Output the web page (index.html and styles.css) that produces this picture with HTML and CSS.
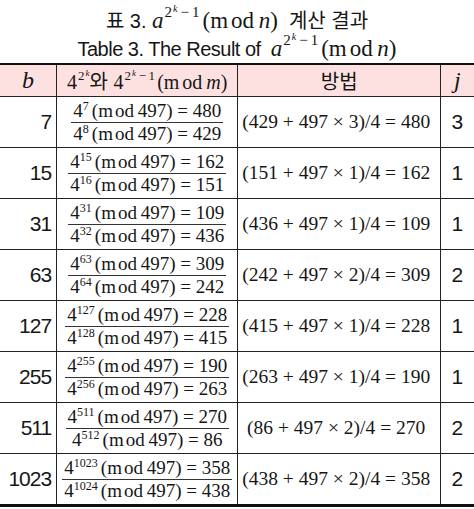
FILE: index.html
```html
<!DOCTYPE html>
<html>
<head>
<meta charset="utf-8">
<link rel="stylesheet" href="styles.css">
</head>
<body>
<div class="page">
  <div class="caption">
    <div class="cap-line ko">표 3. <span class="m"><i>a</i><sup class="s1">2<sup class="s2"><i>k</i></sup>&thinsp;−&thinsp;1</sup><span class="pl">(m<span class="gap"></span>od&thinsp;<i>n</i>)</span></span>&nbsp; 계산 결과</div>
    <div class="cap-line en">Table 3. The Result of&nbsp; <span class="m"><i>a</i><sup class="s1">2<sup class="s2"><i>k</i></sup>&thinsp;−&thinsp;1</sup><span class="pl">(m<span class="gap"></span>od&thinsp;<i>n</i>)</span></span></div>
  </div>
  <table class="tbl">
    <thead>
      <tr>
        <th class="c-b"><i class="m">b</i></th>
        <th class="c-f"><span class="m">4<sup class="s1">2<sup class="s2"><i>k</i></sup></sup></span><span class="ko">와</span> <span class="m">4<sup class="s1">2<sup class="s2"><i>k</i></sup>&thinsp;−&thinsp;1</sup><span class="pl">(m<span class="gap"></span>od&thinsp;<i>m</i>)</span></span></th>
        <th class="c-m ko">방법</th>
        <th class="c-j"><i class="m">j</i></th>
      </tr>
    </thead>
    <tbody>
      <tr><td class="c-b">7</td><td class="c-f"><div class="frac"><div class="num">4<sup>7</sup>(m<span class="gap"></span>od&thinsp;497) = 480</div><div class="den">4<sup>8</sup>(m<span class="gap"></span>od&thinsp;497) = 429</div></div></td><td class="c-m">(429 + 497 × 3)/4 = 480</td><td class="c-j">3</td></tr>
      <tr><td class="c-b">15</td><td class="c-f"><div class="frac"><div class="num">4<sup>15</sup>(m<span class="gap"></span>od&thinsp;497) = 162</div><div class="den">4<sup>16</sup>(m<span class="gap"></span>od&thinsp;497) = 151</div></div></td><td class="c-m">(151 + 497 × 1)/4 = 162</td><td class="c-j">1</td></tr>
      <tr><td class="c-b">31</td><td class="c-f"><div class="frac"><div class="num">4<sup>31</sup>(m<span class="gap"></span>od&thinsp;497) = 109</div><div class="den">4<sup>32</sup>(m<span class="gap"></span>od&thinsp;497) = 436</div></div></td><td class="c-m">(436 + 497 × 1)/4 = 109</td><td class="c-j">1</td></tr>
      <tr><td class="c-b">63</td><td class="c-f"><div class="frac"><div class="num">4<sup>63</sup>(m<span class="gap"></span>od&thinsp;497) = 309</div><div class="den">4<sup>64</sup>(m<span class="gap"></span>od&thinsp;497) = 242</div></div></td><td class="c-m">(242 + 497 × 2)/4 = 309</td><td class="c-j">2</td></tr>
      <tr><td class="c-b">127</td><td class="c-f"><div class="frac"><div class="num">4<sup>127</sup>(m<span class="gap"></span>od&thinsp;497) = 228</div><div class="den">4<sup>128</sup>(m<span class="gap"></span>od&thinsp;497) = 415</div></div></td><td class="c-m">(415 + 497 × 1)/4 = 228</td><td class="c-j">1</td></tr>
      <tr><td class="c-b">255</td><td class="c-f"><div class="frac"><div class="num">4<sup>255</sup>(m<span class="gap"></span>od&thinsp;497) = 190</div><div class="den">4<sup>256</sup>(m<span class="gap"></span>od&thinsp;497) = 263</div></div></td><td class="c-m">(263 + 497 × 1)/4 = 190</td><td class="c-j">1</td></tr>
      <tr><td class="c-b">511</td><td class="c-f"><div class="frac"><div class="num">4<sup>511</sup>(m<span class="gap"></span>od&thinsp;497) = 270</div><div class="den">4<sup>512</sup>(m<span class="gap"></span>od&thinsp;497) = 86</div></div></td><td class="c-m">(86 + 497 × 2)/4 = 270</td><td class="c-j">2</td></tr>
      <tr><td class="c-b">1023</td><td class="c-f"><div class="frac"><div class="num">4<sup>1023</sup>(m<span class="gap"></span>od&thinsp;497) = 358</div><div class="den">4<sup>1024</sup>(m<span class="gap"></span>od&thinsp;497) = 438</div></div></td><td class="c-m">(438 + 497 × 2)/4 = 358</td><td class="c-j">2</td></tr>
    </tbody>
  </table>
</div>
</body>
</html>
```

FILE: styles.css
```css
html, body {
  margin: 0;
  padding: 0;
  background: #ffffff;
}
body {
  width: 474px;
  height: 509px;
  overflow: hidden;
  color: #161616;
  font-family: "Liberation Sans", "Noto Sans CJK KR", sans-serif;
}
.page {
  width: 474px;
}
.caption {
  padding-top: 7px;
  height: 63px;
  box-sizing: border-box;
  text-align: center;
}
.cap-line {
  font-size: 20px;
  line-height: 28px;
  white-space: nowrap;
}
.cap-line.en {
  letter-spacing: -0.5px;
}
.cap-line.en .m {
  letter-spacing: 0;
}
.ko {
  font-family: "Liberation Sans", "Noto Sans CJK KR", sans-serif;
}
.m {
  font-family: "Liberation Serif", "DejaVu Serif", serif;
  font-size: 23px;
}
.m i, i.m {
  font-style: italic;
}
.gap {
  display: inline-block;
  width: 3px;
}
.pl {
  margin-left: 3px;
}
sup {
  line-height: 0;
}
.s1 {
  font-size: 15px;
  vertical-align: 11px;
  margin-left: 1px;
}
.s2 {
  font-size: 10px;
  vertical-align: 5px;
  margin-left: 1px;
}
.tbl {
  width: 474px;
  border-collapse: collapse;
  table-layout: fixed;
  border-top: 2px solid #111;
  border-bottom: 3px solid #111;
}
.tbl th, .tbl td {
  border: 1px solid #222;
  padding: 0;
}
.tbl tr > :first-child { border-left: none; }
.tbl tr > :last-child { border-right: none; }
.tbl thead th {
  background: #fde1e1;
  height: 31px;
  font-weight: normal;
  font-size: 20px;
}
.tbl tbody td {
  height: 50px;
}
.c-b { width: 56px; }
.c-f { width: 180px; }
.c-m { width: 201px; }
.c-j { width: 33px; }
th.c-b .m, th.c-j .m { font-size: 24px; }
th.c-f .m { font-size: 20px; }
th.c-f .s1 { font-size: 13px; vertical-align: 9px; }
th.c-f .s2 { font-size: 9px; vertical-align: 4px; }
th.c-f .pl { margin-left: 2px; }
th.c-f { white-space: nowrap; }
td.c-b {
  text-align: right;
  padding-right: 5px;
  font-size: 21px;
  letter-spacing: -1px;
}
td.c-j {
  text-align: center;
  font-size: 21px;
}
td.c-m {
  text-align: center;
  font-family: "Liberation Serif", serif;
  font-size: 19.5px;
  white-space: nowrap;
  padding-right: 6px;
}
td.c-f {
  text-align: center;
}
.frac {
  display: inline-block;
  font-family: "Liberation Serif", serif;
  font-size: 19px;
  line-height: 22px;
  white-space: nowrap;
}
.frac .gap {
  width: 2px;
}
.frac sup {
  font-size: 12px;
  vertical-align: 7px;
  margin-right: 3px;
}
.num {
  border-bottom: 1px solid #333;
  padding: 0 2px;
}
.den {
  padding: 0 2px;
}
```
